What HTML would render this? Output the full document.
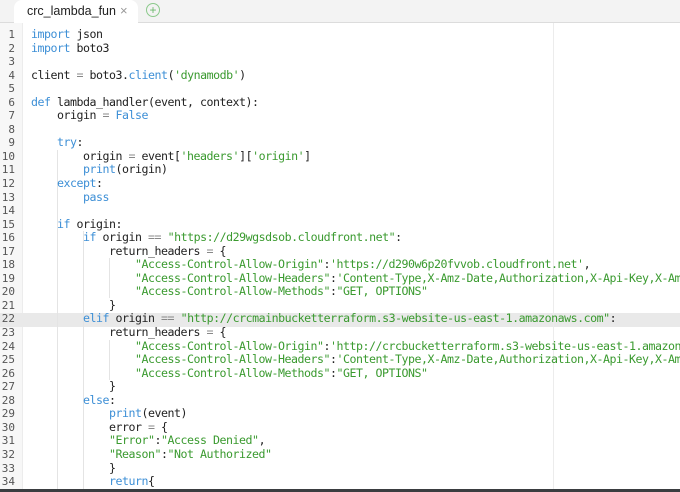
<!DOCTYPE html>
<html><head><meta charset="utf-8"><style>
html,body{margin:0;padding:0;width:680px;height:492px;overflow:hidden;background:#fff;}
#tabs{position:absolute;left:0;top:0;width:680px;height:22px;background:#f3f3f3;border-bottom:1px solid #dcdcdc;}
#tab{position:absolute;left:14px;top:0;width:124px;height:23px;background:#fff;border-radius:8px 8px 0 0;font:12.5px "Liberation Sans",sans-serif;color:#222;}
#tab span{position:absolute;left:13px;top:4px;}
#tab i{position:absolute;left:106px;top:3px;font-style:normal;color:#999;font-size:13px;}
#plus{position:absolute;left:146px;top:3px;width:12px;height:12px;border:1px solid #8bc98b;border-radius:50%;color:#6cb86c;font:12px/12px "Liberation Sans",sans-serif;text-align:center;}
#gut{position:absolute;left:0;top:23px;width:22px;height:466px;background:#f7f7f7;border-right:1px solid #ececec;}
#hl{position:absolute;left:0;top:313px;width:680px;height:14px;background:#e9e9e9;}
#code{position:absolute;left:0;top:28px;width:680px;overflow:hidden;margin:0;font:11.6px/13.55px "DejaVu Sans Mono",monospace;letter-spacing:-0.48px;color:#222;white-space:pre;}
.n{display:inline-block;width:15px;text-align:right;color:#555;margin-right:16px;letter-spacing:0;font-size:11px;}
.k{color:#3d8fd6}.s{color:#3a9a2f}.o{color:#888}
.g{position:absolute;width:1px;background:#e4e4e4;}
#bot{position:absolute;left:0;top:489px;width:680px;height:3px;background:#3a3d40;}
#margin{position:absolute;left:553px;top:23px;width:1px;height:466px;background:#ececec;}
</style></head><body>
<div id="tabs"><div id="tab"><span>crc_lambda_fun</span><i>×</i></div><div id="plus">+</div></div>
<div id="gut"></div>
<div id="hl"></div>
<div id="margin"></div>
<div class="g" style="left:57px;top:150px;height:339px"></div>
<div class="g" style="left:83px;top:231px;height:258px"></div>
<div class="g" style="left:109px;top:258px;height:40px"></div>
<div class="g" style="left:109px;top:340px;height:40px"></div>
<pre id="code"><span class="n">1</span><span class="k">import</span> json
<span class="n">2</span><span class="k">import</span> boto3
<span class="n">3</span>
<span class="n">4</span>client <span class="o">=</span> boto3.<span class="k">client</span>(<span class="s">'dynamodb'</span>)
<span class="n">5</span>
<span class="n">6</span><span class="k">def</span> lambda_handler(event, context):
<span class="n">7</span>    origin <span class="o">=</span> <span class="k">False</span>
<span class="n">8</span>
<span class="n">9</span>    <span class="k">try</span>:
<span class="n">10</span>        origin <span class="o">=</span> event[<span class="s">'headers'</span>][<span class="s">'origin'</span>]
<span class="n">11</span>        <span class="k">print</span>(origin)
<span class="n">12</span>    <span class="k">except</span>:
<span class="n">13</span>        <span class="k">pass</span>
<span class="n">14</span>
<span class="n">15</span>    <span class="k">if</span> origin:
<span class="n">16</span>        <span class="k">if</span> origin <span class="o">==</span> <span class="s">"https://d29wgsdsob.cloudfront.net"</span>:
<span class="n">17</span>            return_headers <span class="o">=</span> {
<span class="n">18</span>                <span class="s">"Access-Control-Allow-Origin"</span>:<span class="s">'https://d290w6p20fvvob.cloudfront.net'</span>,
<span class="n">19</span>                <span class="s">"Access-Control-Allow-Headers"</span>:<span class="s">'Content-Type,X-Amz-Date,Authorization,X-Api-Key,X-Amz-Security-Token'</span>,
<span class="n">20</span>                <span class="s">"Access-Control-Allow-Methods"</span>:<span class="s">"GET, OPTIONS"</span>
<span class="n">21</span>            }
<span class="n">22</span>        <span class="k">elif</span> origin <span class="o">==</span> <span class="s">"http://crcmainbucketterraform.s3-website-us-east-1.amazonaws.com"</span>:
<span class="n">23</span>            return_headers <span class="o">=</span> {
<span class="n">24</span>                <span class="s">"Access-Control-Allow-Origin"</span>:<span class="s">'http://crcbucketterraform.s3-website-us-east-1.amazonaws.com'</span>,
<span class="n">25</span>                <span class="s">"Access-Control-Allow-Headers"</span>:<span class="s">'Content-Type,X-Amz-Date,Authorization,X-Api-Key,X-Amz-Security-Token'</span>,
<span class="n">26</span>                <span class="s">"Access-Control-Allow-Methods"</span>:<span class="s">"GET, OPTIONS"</span>
<span class="n">27</span>            }
<span class="n">28</span>        <span class="k">else</span>:
<span class="n">29</span>            <span class="k">print</span>(event)
<span class="n">30</span>            error <span class="o">=</span> {
<span class="n">31</span>            <span class="s">"Error"</span>:<span class="s">"Access Denied"</span>,
<span class="n">32</span>            <span class="s">"Reason"</span>:<span class="s">"Not Authorized"</span>
<span class="n">33</span>            }
<span class="n">34</span>            <span class="k">return</span>{
</pre>
<div id="bot"></div>
</body></html>
